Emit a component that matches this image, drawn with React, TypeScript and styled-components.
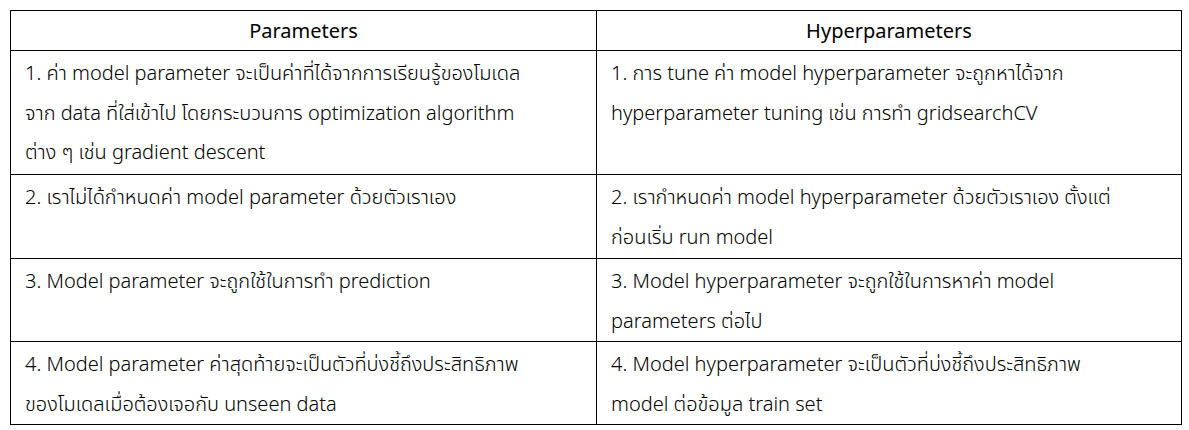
import React from "react";
import styled, { createGlobalStyle } from "styled-components";

const Global = createGlobalStyle`
  html, body { margin: 0; padding: 0; background: #ffffff; }
  body { font-family: "Noto Sans", "Noto Sans Thai", "Leelawadee UI", sans-serif; color: #000; }
`;

const Page = styled.div`
  padding: 10px 8px 0 10px;
`;

const Table = styled.table`
  border-collapse: collapse;
  table-layout: fixed;
  width: 1171px;
`;

const Col = styled.col<{ $w: number }>`
  width: ${(p) => p.$w}px;
`;

const HeadCell = styled.th`
  border: 1px solid #000;
  font-weight: 400;
  font-size: 20px;
  line-height: 39px;
  height: 39px;
  padding: 0;
  text-align: center;
`;

const Cell = styled.td<{ $h: number }>`
  border: 1px solid #000;
  font-size: 20px;
  font-weight: 300;
  line-height: 39.5px;
  height: ${(p) => p.$h}px;
  padding: 2px 14px 0 14px;
  vertical-align: top;
  box-sizing: border-box;
`;

const Line = styled.div`
  white-space: nowrap;
`;

const rows: { h: number; left: string[]; right: string[] }[] = [
  {
    h: 124,
    left: [
      "1. ค่า model parameter จะเป็นค่าที่ได้จากการเรียนรู้ของโมเดล",
      "จาก data ที่ใส่เข้าไป โดยกระบวนการ optimization algorithm",
      "ต่าง ๆ เช่น gradient descent",
    ],
    right: [
      "1. การ tune ค่า model hyperparameter จะถูกหาได้จาก",
      "hyperparameter tuning เช่น การทำ gridsearchCV",
    ],
  },
  {
    h: 84,
    left: ["2. เราไม่ได้กำหนดค่า model parameter ด้วยตัวเราเอง"],
    right: [
      "2. เรากำหนดค่า model hyperparameter ด้วยตัวเราเอง ตั้งแต่",
      "ก่อนเริ่ม run model",
    ],
  },
  {
    h: 83,
    left: ["3. Model parameter จะถูกใช้ในการทำ prediction"],
    right: [
      "3. Model hyperparameter จะถูกใช้ในการหาค่า model",
      "parameters ต่อไป",
    ],
  },
  {
    h: 83,
    left: [
      "4. Model parameter ค่าสุดท้ายจะเป็นตัวที่บ่งชี้ถึงประสิทธิภาพ",
      "ของโมเดลเมื่อต้องเจอกับ unseen data",
    ],
    right: [
      "4. Model hyperparameter จะเป็นตัวที่บ่งชี้ถึงประสิทธิภาพ",
      "model ต่อข้อมูล train set",
    ],
  },
];

export default function App() {
  return (
    <Page>
      <Global />
      <Table>
        <colgroup>
          <Col $w={586} />
          <Col $w={585} />
        </colgroup>
        <thead>
          <tr>
            <HeadCell>Parameters</HeadCell>
            <HeadCell>Hyperparameters</HeadCell>
          </tr>
        </thead>
        <tbody>
          {rows.map((r, i) => (
            <tr key={i}>
              <Cell $h={r.h}>
                {r.left.map((l, j) => (
                  <Line key={j}>{l}</Line>
                ))}
              </Cell>
              <Cell $h={r.h}>
                {r.right.map((l, j) => (
                  <Line key={j}>{l}</Line>
                ))}
              </Cell>
            </tr>
          ))}
        </tbody>
      </Table>
    </Page>
  );
}
